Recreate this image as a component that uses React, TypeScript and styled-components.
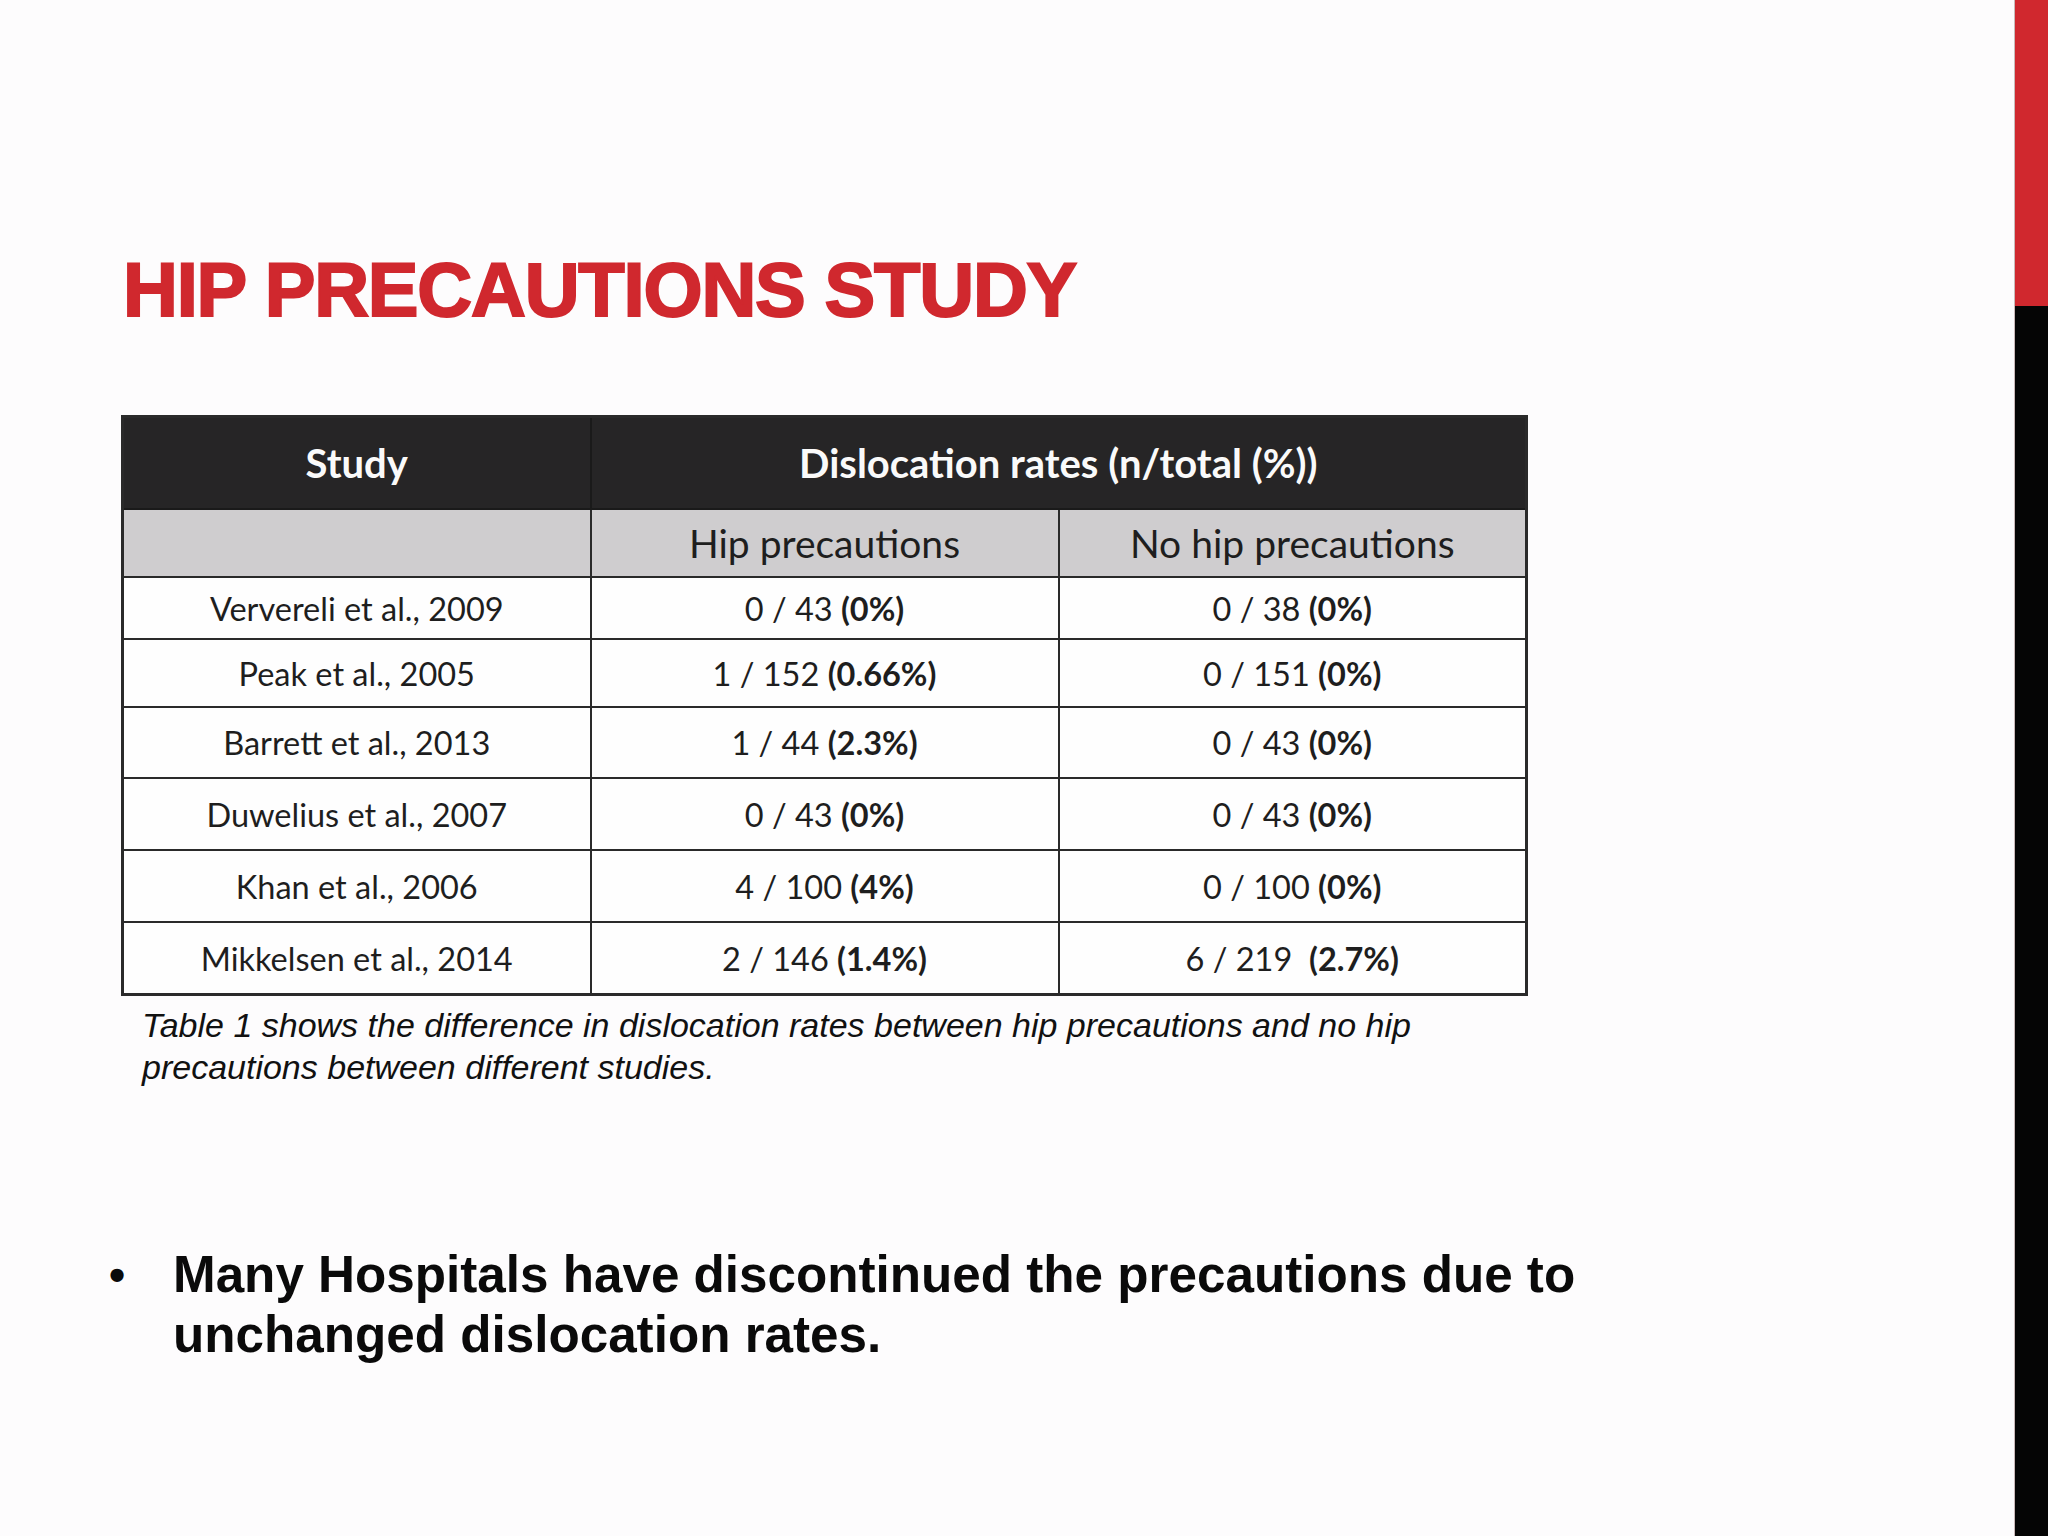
import React from 'react'
import styled, { createGlobalStyle } from 'styled-components'

const GlobalStyle = createGlobalStyle`
  html, body {
    margin: 0;
    padding: 0;
    background: #fefefe;
  }
`

const Slide = styled.div`
  display: flex;
  width: 2048px;
  height: 1536px;
  background: #fdfcfd;
  overflow: hidden;
`

const Content = styled.main`
  flex: 1;
  display: flex;
  flex-direction: column;
  padding: 252px 0 0 121px;
`

const SideBar = styled.aside`
  width: 33px;
  display: flex;
  flex-direction: column;
  border-left: 1px solid #c9b9b9;
`

const BarPart = styled.div<{ $color: string; $height?: number }>`
  background: ${(p) => p.$color};
  height: ${(p) => (p.$height ? `${p.$height}px` : 'auto')};
  flex: ${(p) => (p.$height ? 'none' : '1')};
`

const Title = styled.h1`
  margin: 0 0 0 2px;
  font-family: 'Liberation Sans', Arial, sans-serif;
  font-weight: 700;
  font-size: 76px;
  line-height: 76px;
  letter-spacing: -1.2px;
  color: #d0282e;
  -webkit-text-stroke: 2px #d0282e;
`

const Table = styled.table`
  margin-top: 87px;
  width: 1407px;
  border-collapse: collapse;
  table-layout: fixed;
  font-family: Lato, 'Open Sans', sans-serif;
  color: #1e1e1e;
  border: 3px solid #2a2a2a;
`

const HeadCell = styled.th`
  background: #262526;
  color: #fafafa;
  font-weight: 700;
  font-size: 40px;
  height: 90px;
  padding: 0;
  border: 2px solid #1a1a1a;
  text-align: center;
`

const SubCell = styled.td`
  background: #cfcdcf;
  font-size: 39px;
  height: 66px;
  padding: 0;
  border: 2px solid #2a2a2a;
  text-align: center;
`

const Cell = styled.td<{ $h: number }>`
  background: #fefefe;
  font-size: 32.5px;
  height: ${(p) => p.$h}px;
  border: 2px solid #2a2a2a;
  text-align: center;
  padding: 0;

  b {
    font-weight: 700;
  }
`

const Caption = styled.p`
  margin: 8px 0 0 21px;
  width: 1330px;
  font-family: 'Liberation Sans', Arial, sans-serif;
  font-style: italic;
  font-size: 34px;
  line-height: 42px;
  color: #111;
`

const Bullets = styled.ul`
  margin: 157px 0 0 0;
  padding: 0;
  list-style: none;
`

const Bullet = styled.li`
  display: flex;
  width: 1470px;
  font-family: 'Liberation Sans', Arial, sans-serif;
  font-weight: 700;
  font-size: 51.2px;
  line-height: 60px;
  color: #0a0a0a;

  &::before {
    content: '•';
    flex: none;
    width: 64px;
    margin-left: -12px;
    font-weight: 700;
    font-size: 46px;
  }
`

const rows: [string, string, string, string, string, number][] = [
  ['Ververeli et al., 2009', '0 / 43', '(0%)', '0 / 38', '(0%)', 60],
  ['Peak et al., 2005', '1 / 152', '(0.66%)', '0 / 151', '(0%)', 66],
  ['Barrett et al., 2013', '1 / 44', '(2.3%)', '0 / 43', '(0%)', 69],
  ['Duwelius et al., 2007', '0 / 43', '(0%)', '0 / 43', '(0%)', 70],
  ['Khan et al., 2006', '4 / 100', '(4%)', '0 / 100', '(0%)', 70],
  ['Mikkelsen et al., 2014', '2 / 146', '(1.4%)', '6 / 219\u00a0', '(2.7%)', 70],
]

const App: React.FC = () => {
  return (
    <>
      <GlobalStyle />
      <Slide>
        <Content>
          <Title>HIP PRECAUTIONS STUDY</Title>
          <Table>
            <thead>
              <tr>
                <HeadCell>Study</HeadCell>
                <HeadCell colSpan={2}>Dislocation rates (n/total (%))</HeadCell>
              </tr>
            </thead>
            <tbody>
              <tr>
                <SubCell />
                <SubCell>Hip precautions</SubCell>
                <SubCell>No hip precautions</SubCell>
              </tr>
              {rows.map(([study, a, ap, b, bp, h]) => (
                <tr key={study}>
                  <Cell $h={h}>{study}</Cell>
                  <Cell $h={h}>
                    {a} <b>{ap}</b>
                  </Cell>
                  <Cell $h={h}>
                    {b} <b>{bp}</b>
                  </Cell>
                </tr>
              ))}
            </tbody>
          </Table>
          <Caption>
            Table 1 shows the difference in dislocation rates between hip precautions and no hip precautions
            between different studies.
          </Caption>
          <Bullets>
            <Bullet>Many Hospitals have discontinued the precautions due to unchanged dislocation rates.</Bullet>
          </Bullets>
        </Content>
        <SideBar>
          <BarPart $color="#d0282e" $height={306} />
          <BarPart $color="#050505" />
        </SideBar>
      </Slide>
    </>
  )
}

export default App
